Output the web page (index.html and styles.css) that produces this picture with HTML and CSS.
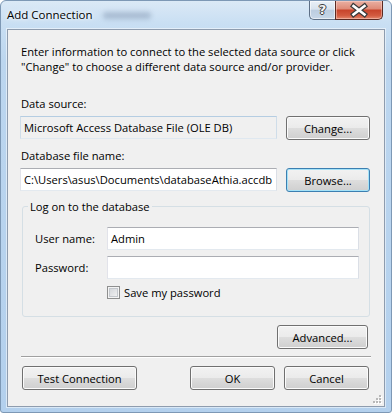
FILE: index.html
```html
<!DOCTYPE html>
<html>
<head>
<meta charset="utf-8">
<title>Add Connection</title>
<link rel="stylesheet" href="styles.css">
</head>
<body>
<div class="window">
  <div class="titlebar">
    <span class="title">Add Connection</span>
    <span class="ghost"></span>
    <div class="caption">
      <div class="cap-help"><span class="qmark">?</span></div>
      <div class="cap-close">
        <svg width="48" height="19" viewBox="0 0 48 19">
          <path d="M18.5 5 L29.5 13.5 M29.5 5 L18.5 13.5" stroke="#3a3a3a" stroke-width="5" stroke-linecap="square" fill="none"/>
          <path d="M18.5 5 L29.5 13.5 M29.5 5 L18.5 13.5" stroke="#ffffff" stroke-width="2.6" stroke-linecap="square" fill="none"/>
        </svg>
      </div>
    </div>
  </div>
  <div class="client">
    <p class="intro">Enter information to connect to the selected data source or click<br>"Change" to choose a different data source and/or provider.</p>
    <div class="label">Data source:</div>
    <div class="row">
      <div class="field readonly">Microsoft Access Database File (OLE DB)</div>
      <div class="btn btn-side">Change...</div>
    </div>
    <div class="label label2">Database file name:</div>
    <div class="row">
      <div class="field">C:\Users\asus\Documents\databaseAthia.accdb</div>
      <div class="btn btn-side btn-default">Browse...</div>
    </div>
    <fieldset class="group">
      <legend class="legend">Log on to the database</legend>
      <div class="grid">
        <span class="glabel">User name:</span>
        <div class="field gfield">Admin</div>
        <span class="glabel">Password:</span>
        <div class="field gfield"></div>
        <span></span>
        <div class="check"><span class="box"></span><span class="check-text">Save my password</span></div>
      </div>
    </fieldset>
    <div class="adv-row"><div class="btn btn-adv">Advanced...</div></div>
    <div class="sep"></div>
    <div class="bottom-row">
      <div class="btn btn-test">Test Connection</div>
      <div class="spacer"></div>
      <div class="btn btn-ok">OK</div>
      <div class="btn btn-cancel">Cancel</div>
    </div>
    <svg class="grip" width="9" height="9" viewBox="0 0 9 9">
      <g fill="#ffffff">
        <rect x="7" y="1" width="2" height="2"/><rect x="4" y="4" width="2" height="2"/><rect x="7" y="4" width="2" height="2"/>
        <rect x="1" y="7" width="2" height="2"/><rect x="4" y="7" width="2" height="2"/><rect x="7" y="7" width="2" height="2"/>
      </g>
      <g fill="#b8b8b8">
        <rect x="6" y="0" width="2" height="2"/><rect x="3" y="3" width="2" height="2"/><rect x="6" y="3" width="2" height="2"/>
        <rect x="0" y="6" width="2" height="2"/><rect x="3" y="6" width="2" height="2"/><rect x="6" y="6" width="2" height="2"/>
      </g>
    </svg>
  </div>
</div>
</body>
</html>
```

FILE: styles.css
```css
html, body {
  margin: 0;
  padding: 0;
  background: #ffffff;
}

body {
  font-family: "Open Sans", "Noto Sans", "Liberation Sans", sans-serif;
  font-size: 11.2px;
  color: #000;
}

.window {
  width: 392px;
  height: 413px;
  box-sizing: border-box;
  border: 1px solid #7d98b5;
  border-radius: 6px 6px 3px 3px;
  background: linear-gradient(to bottom, #dbe9f6 0px, #c9dff3 22px, #bcd6ef 60px, #b3d0ed 100%);
  padding: 0 6px 5px 6px;
  display: flex;
  flex-direction: column;
}

.titlebar {
  height: 28px;
  display: flex;
  align-items: flex-start;
  flex-shrink: 0;
}

.title {
  padding-top: 6px;
  line-height: 15px;
  font-size: 11.5px;
  color: #000;
  text-shadow: 0 0 6px rgba(255, 255, 255, 0.95), 0 0 3px rgba(255, 255, 255, 0.9);
}

.ghost {
  width: 48px;
  height: 7px;
  margin: 11px 0 0 10px;
  border-radius: 3px;
  background: rgba(95, 115, 145, 0.35);
  filter: blur(2.5px);
}

.caption {
  margin-left: auto;
  margin-right: 2px;
  display: flex;
}

.cap-help {
  width: 26px;
  height: 19px;
  box-sizing: border-box;
  border: 1px solid #5d6f86;
  border-top: none;
  border-right: none;
  border-radius: 0 0 0 5px;
  background: linear-gradient(to bottom, #e9f0f7 0%, #d8e3ee 45%, #bccde0 52%, #c7d7e8 100%);
  box-shadow: inset 0 0 0 1px rgba(255, 255, 255, 0.55);
  display: flex;
  justify-content: center;
}

.qmark {
  font-family: "DejaVu Sans", sans-serif;
  font-weight: bold;
  font-size: 13px;
  line-height: 18px;
  color: #f4f4f4;
  text-shadow: 1px 0 #3d3d3d, -1px 0 #3d3d3d, 0 1px #3d3d3d, 0 -1px #3d3d3d;
}

.cap-close {
  width: 48px;
  height: 19px;
  box-sizing: border-box;
  border: 1px solid #5b2a22;
  border-top: none;
  border-radius: 0 0 5px 0;
  background: linear-gradient(to bottom, #eab0a3 0%, #df8c79 42%, #c8452c 52%, #d25a3f 80%, #e3876c 100%);
  box-shadow: inset 0 0 0 1px rgba(255, 220, 210, 0.45);
  overflow: hidden;
}

.cap-close svg {
  display: block;
  margin-left: -1px;
}

.client {
  position: relative;
  flex: 1;
  box-sizing: border-box;
  border: 1px solid #8e9cae;
  box-shadow: 0 0 0 1px rgba(255, 255, 255, 0.5);
  background: #f0f0f0;
  padding: 0 14px 0 12px;
}

.intro {
  margin: 14px 0 0 1px;
  line-height: 15px;
  white-space: nowrap;
}

.label {
  margin-top: 22px;
  line-height: 15px;
  padding-left: 1px;
}

.label2 {
  margin-top: 8px;
}

.row {
  margin-top: 5px;
  display: flex;
  align-items: flex-start;
  gap: 9px;
}

.field {
  width: 257px;
  height: 23px;
  box-sizing: border-box;
  border: 1px solid;
  border-color: #abadb3 #dbdfe6 #e3e9ef #e2e3ea;
  background: #ffffff;
  padding: 0 3px;
  line-height: 21px;
  white-space: nowrap;
  overflow: hidden;
}

.readonly {
  background: #f0f0f0;
  border-color: #b5cde2 #cfdde9 #dfe8f0 #cfdde9;
}

.btn {
  height: 24px;
  box-sizing: border-box;
  border: 1px solid #707070;
  border-radius: 3px;
  background: linear-gradient(to bottom, #f2f2f2 0%, #ebebeb 48%, #dddddd 52%, #cfcfcf 100%);
  box-shadow: inset 0 0 0 1px #fbfbfb;
  display: flex;
  align-items: center;
  justify-content: center;
  line-height: 15px;
  flex-shrink: 0;
}

.btn-default {
  border-color: #3c7fb1;
  box-shadow: inset 0 0 0 1px #a4e2f8;
}

.btn-side {
  width: 84px;
}

.group {
  margin: 7px 0 0 2px;
  width: 348px;
  box-sizing: border-box;
  min-width: 0;
  border: 1px solid #d5dfe5;
  border-radius: 3px;
  padding: 13px 10px 16px 12px;
}

.legend {
  margin-left: -7px;
  padding: 0 2px;
  line-height: 15px;
}

.grid {
  display: grid;
  grid-template-columns: 72px 252px;
  row-gap: 6px;
  align-items: center;
}

.glabel {
  line-height: 15px;
}

.gfield {
  width: 252px;
}

.check {
  display: flex;
  align-items: center;
  gap: 4px;
  line-height: 15px;
}

.box {
  width: 13px;
  height: 13px;
  box-sizing: border-box;
  border: 1px solid #8e8f8f;
  background: linear-gradient(135deg, #cdd1d6 0%, #e6e7e9 60%, #f8f8f8 100%);
  box-shadow: inset 0 0 0 1px #f4f4f4, inset 0 0 0 2px #c4c8cd;
}

.adv-row {
  margin-top: 8px;
  padding-right: 2px;
  display: flex;
  justify-content: flex-end;
}

.btn-adv {
  width: 91px;
}

.sep {
  margin: 7px -1px 0 1px;
  height: 0;
  border-top: 1px solid #a0a0a0;
  border-bottom: 1px solid #ffffff;
}

.bottom-row {
  margin-top: 8px;
  display: flex;
  gap: 9px;
}

.btn-test {
  width: 115px;
  margin-left: 2px;
}

.spacer {
  flex: 1;
}

.btn-ok {
  width: 85px;
}

.btn-cancel {
  width: 85px;
  margin-right: 1px;
}

.grip {
  position: absolute;
  right: 2px;
  bottom: 2px;
}
```
